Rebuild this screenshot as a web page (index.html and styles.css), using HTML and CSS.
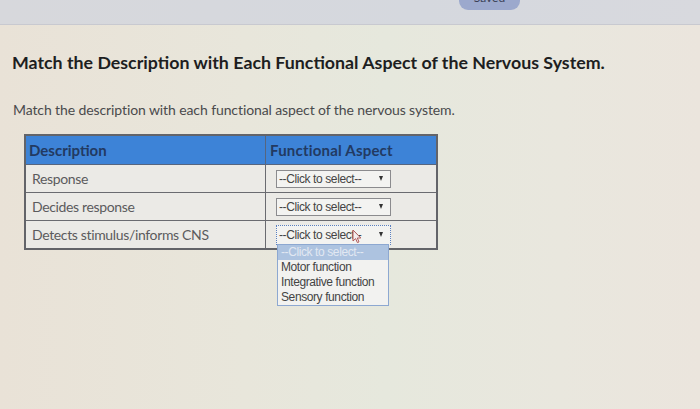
FILE: index.html
```html
<!DOCTYPE html>
<html lang="en">
<head>
<meta charset="utf-8">
<title>Match the Description</title>
<link rel="stylesheet" href="styles.css">
</head>
<body>
<div class="topbar"><div class="pill">Saved</div></div>
<main class="content">
  <h1 class="title">Match the Description with Each Functional Aspect of the Nervous System.</h1>
  <p class="lead">Match the description with each functional aspect of the nervous system.</p>
  <table class="match">
    <thead>
      <tr><th class="c1">Description</th><th class="c2">Functional Aspect</th></tr>
    </thead>
    <tbody>
      <tr>
        <td>Response</td>
        <td><div class="sel"><span>--Click to select--</span><i class="arr"></i></div></td>
      </tr>
      <tr>
        <td>Decides response</td>
        <td><div class="sel"><span>--Click to select--</span><i class="arr"></i></div></td>
      </tr>
      <tr>
        <td>Detects stimulus/informs CNS</td>
        <td>
          <div class="sel open"><span>--Click to select--</span><i class="arr"></i>
            <ul class="list">
              <li class="hl">--Click to select--</li>
              <li>Motor function</li>
              <li>Integrative function</li>
              <li>Sensory function</li>
            </ul>
            <svg class="cursor" width="10" height="15" viewBox="0 0 10 15"><path d="M1 1 L1 12 L3.6 9.6 L5.4 13.6 L7 12.9 L5.3 9 L8.8 9 Z" fill="#f4eeee" stroke="#b05a5a" stroke-width="1"/></svg>
          </div>
        </td>
      </tr>
    </tbody>
  </table>
</main>
</body>
</html>
```

FILE: styles.css
```css
html, body {
  margin: 0;
  padding: 0;
  width: 700px;
  height: 409px;
  overflow: hidden;
}

body {
  background: linear-gradient(90deg, #e9e2d7 0%, #e8e6db 35%, #e6e8dd 55%, #e9e7de 80%, #ebe5dd 100%);
  font-family: Lato, "Liberation Sans", sans-serif;
}

.topbar {
  height: 24px;
  background: linear-gradient(90deg, #d7d8dc 0%, #d5d8de 60%, #d8d9de 100%);
  border-bottom: 1px solid #c8c9d0;
  display: flex;
  padding-left: 459px;
  overflow: hidden;
}

.pill {
  width: 61px;
  height: 22px;
  margin-top: -12px;
  border-radius: 9px;
  background: #9ca9cd;
  color: #3a3f55;
  font-size: 12px;
  line-height: 20px;
  text-align: center;
}

.content {
  padding-left: 12px;
}

.title {
  margin: 26px 0 0;
  font-size: 17.8px;
  line-height: 22px;
  font-weight: 700;
  color: #1d1e21;
}

.lead {
  margin: 28px 0 0 1px;
  font-size: 14px;
  line-height: 18px;
  letter-spacing: -0.1px;
  color: #4a4a4c;
}

.match {
  border-collapse: collapse;
  margin: 15px 0 0 12px;
  width: 414px;
  border: 2px solid #636469;
}

.match th {
  height: 28px;
  background: #3d83d7;
  color: #223a62;
  font-size: 15px;
  font-weight: 700;
  text-align: left;
  padding: 0 0 0 3px;
  border: 1px solid #56657f;
}

.match th.c1 {
  width: 236px;
}

.match th.c2 {
  padding-left: 4px;
  letter-spacing: 0.2px;
}

.match td {
  height: 27px;
  background: #ebeae6;
  color: #5b5b5d;
  font-size: 14px;
  letter-spacing: -0.35px;
  padding: 0 0 0 6px;
  border: 1px solid #6a6b70;
}

.sel {
  position: relative;
  width: 115px;
  height: 18px;
  margin-left: 4px;
  box-sizing: border-box;
  border: 1px solid #8b8b8e;
  background: #f3f3f1;
  display: flex;
  align-items: center;
  padding-left: 2px;
  font-family: "Liberation Sans", Arial, sans-serif;
  font-size: 12px;
  letter-spacing: -0.4px;
  color: #444;
}

.sel.open {
  height: 20px;
  border: 1px dotted #5a7fbf;
}

.arr {
  margin-left: auto;
  margin-right: 7px;
  width: 0;
  height: 0;
  border-left: 2.5px solid transparent;
  border-right: 2.5px solid transparent;
  border-top: 5px solid #333;
}

.list {
  position: absolute;
  left: 0;
  top: 100%;
  width: 110px;
  margin: 0;
  padding: 0;
  list-style: none;
  border: 1px solid #8da8d1;
  background: #f2f2f0;
  z-index: 2;
}

.list li {
  height: 15px;
  line-height: 15px;
  padding-left: 3px;
  color: #444;
}

.list li.hl {
  background: #adc3e0;
  color: #e2e8f2;
}

.cursor {
  position: absolute;
  left: 75px;
  top: 3px;
  z-index: 3;
}
```
